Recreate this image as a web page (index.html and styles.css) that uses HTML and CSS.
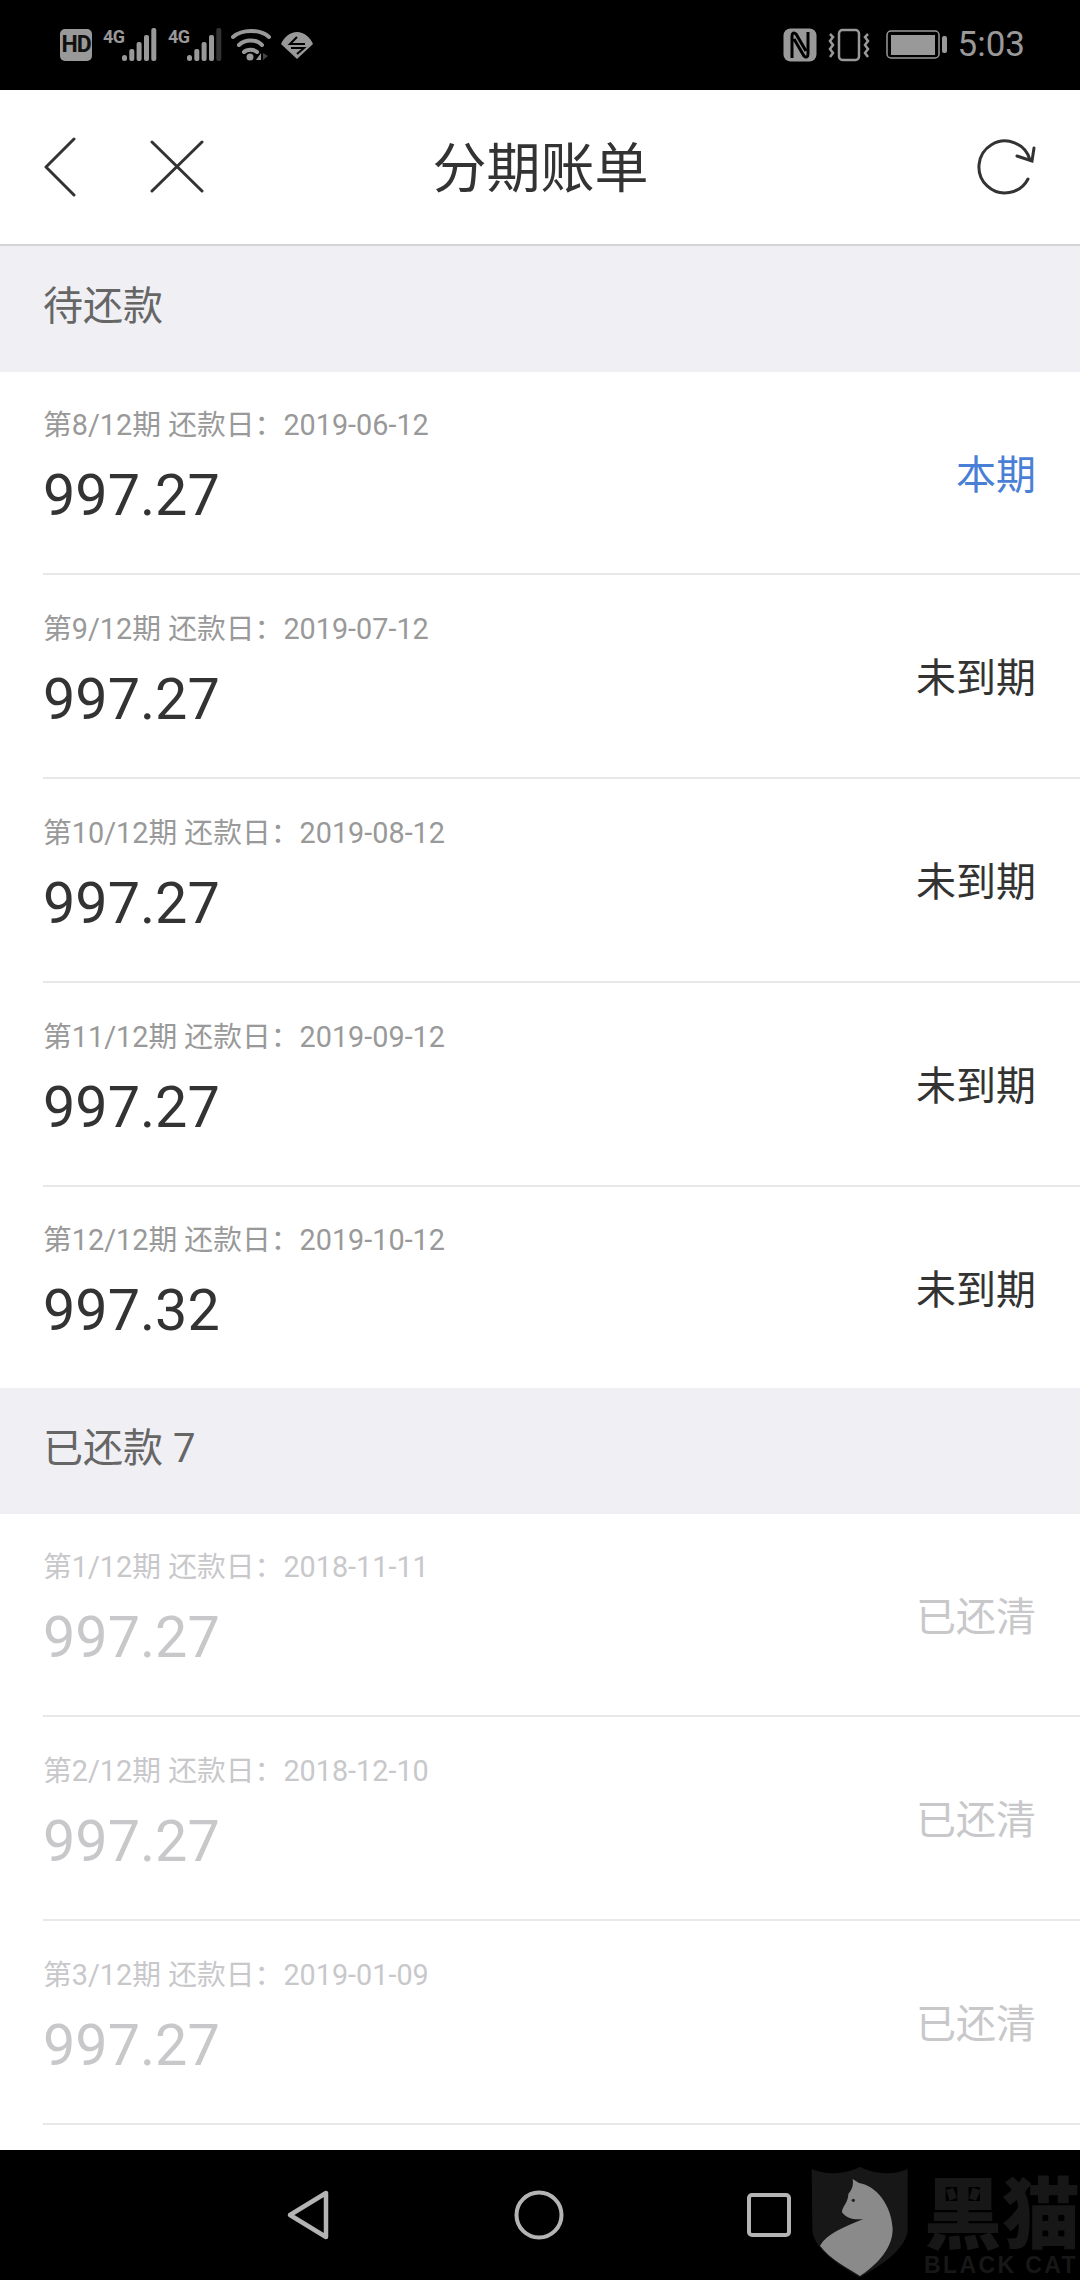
FILE: index.html
```html
<!DOCTYPE html>
<html lang="zh-CN">
<head>
<meta charset="utf-8">
<title>分期账单</title>
<link rel="stylesheet" href="styles.css">
</head>
<body>
<div class="phone">
  <header class="status">
    <div class="status-group">
      <span class="hd">HD</span>
      <div class="signal">
        <span class="net">4G</span>
        <svg class="bars" width="35" height="34" viewBox="0 0 35 34"><g fill="#999"><rect x="0" y="27" width="5" height="6" rx="2.500"/><rect x="7.300" y="21" width="5" height="12" rx="2"/><rect x="14.600" y="14" width="5" height="19" rx="2"/><rect x="22" y="7" width="5" height="26" rx="2"/><rect x="29.300" y="0" width="5" height="33" rx="2"/></g></svg>
      </div>
      <div class="signal">
        <span class="net">4G</span>
        <svg class="bars" width="35" height="34" viewBox="0 0 35 34"><g fill="#999"><rect x="0" y="27" width="5" height="6" rx="2.500"/><rect x="7.300" y="21" width="5" height="12" rx="2"/><rect x="14.600" y="14" width="5" height="19" rx="2"/><rect x="22" y="7" width="5" height="26" rx="2"/></g><rect x="29.300" y="0" width="5" height="33" rx="2" fill="#333"/></svg>
      </div>
      <svg class="wifi" width="42" height="34" viewBox="0 0 42 34"><g fill="none" stroke="#999" stroke-width="4" stroke-linecap="round"><path d="M3 9C12 1 30 1 39 9"/><path d="M9 17C15 11 27 11 32 17"/><path d="M14 24C17 21 24 21 27 24"/></g><circle cx="20" cy="29" r="3.500" fill="#999"/><path d="M26 32l5-7v7z" fill="#999"/><path d="M33 25l5 3-5 4z" fill="#444"/></svg>
      <svg class="diamond" width="34" height="30" viewBox="0 0 34 30"><path d="M1 14C4 7 10 2 17 2s13 5 16 12L17 29z" fill="#999"/><path d="M17 7l-7 7h15M11 18h13l-7 6" fill="none" stroke="#000" stroke-width="2"/></svg>
    </div>
    <div class="status-group status-right">
      <svg class="nfc" width="34" height="34" viewBox="0 0 34 34"><rect x="0.500" y="0.500" width="33" height="33" rx="7" fill="#999"/><path d="M9 30V8c0-3 2-4 4-2l10 17M25 4v22c0 3-2 4-4 2L11 11" fill="none" stroke="#000" stroke-width="3"/></svg>
      <svg class="vibrate" width="42" height="34" viewBox="0 0 42 34"><rect x="11" y="2" width="20" height="30" rx="3.500" fill="none" stroke="#999" stroke-width="2.500"/><path d="M2 6l3 3-3 4 3 4-3 4 3 4-3 4M40 6l-3 3 3 4-3 4 3 4-3 4 3 4" fill="none" stroke="#999" stroke-width="2.500"/></svg>
      <svg class="battery" width="62" height="30" viewBox="0 0 62 30"><rect x="1" y="1" width="52" height="27" rx="4" fill="none" stroke="#999" stroke-width="1.500"/><rect x="5" y="5" width="44" height="20" fill="#999"/><rect x="56" y="6" width="5" height="17" rx="2" fill="#999"/></svg>
      <span class="time">5:03</span>
    </div>
  </header>

  <nav class="topbar">
    <div class="top-left">
      <svg width="32" height="60" viewBox="0 0 32 60"><path d="M30 2L2 30l28 28" fill="none" stroke="#333" stroke-width="3" stroke-linecap="round" stroke-linejoin="round"/></svg>
      <svg width="54" height="54" viewBox="0 0 54 54"><path d="M2 2l50 49M52 2L2 51" fill="none" stroke="#333" stroke-width="3" stroke-linecap="round"/></svg>
    </div>
    <h1 class="title">分期账单</h1>
    <div class="top-right">
      <svg width="60" height="60" viewBox="0 0 60 60"><path d="M51 42A26 26 0 1 1 53 23" fill="none" stroke="#333" stroke-width="3" stroke-linecap="round"/><path d="M40 19l15 5 2-13" fill="none" stroke="#333" stroke-width="3" stroke-linecap="round"/></svg>
    </div>
  </nav>

  <main class="content">
    <section>
      <h2 class="section-head">待还款</h2>
      <ul class="list">
        <li class="row">
          <div class="info"><p class="date">第8/12期 还款日<span class="colon">：</span>2019-06-12</p><p class="amount">997.27</p></div>
          <span class="state state-current">本期</span>
        </li>
        <li class="row">
          <div class="info"><p class="date">第9/12期 还款日<span class="colon">：</span>2019-07-12</p><p class="amount">997.27</p></div>
          <span class="state">未到期</span>
        </li>
        <li class="row">
          <div class="info"><p class="date">第10/12期 还款日<span class="colon">：</span>2019-08-12</p><p class="amount">997.27</p></div>
          <span class="state">未到期</span>
        </li>
        <li class="row">
          <div class="info"><p class="date">第11/12期 还款日<span class="colon">：</span>2019-09-12</p><p class="amount">997.27</p></div>
          <span class="state">未到期</span>
        </li>
        <li class="row">
          <div class="info"><p class="date">第12/12期 还款日<span class="colon">：</span>2019-10-12</p><p class="amount">997.32</p></div>
          <span class="state">未到期</span>
        </li>
      </ul>
    </section>
    <section>
      <h2 class="section-head">已还款 7</h2>
      <ul class="list list-paid">
        <li class="row">
          <div class="info"><p class="date">第1/12期 还款日<span class="colon">：</span>2018-11-11</p><p class="amount">997.27</p></div>
          <span class="state">已还清</span>
        </li>
        <li class="row">
          <div class="info"><p class="date">第2/12期 还款日<span class="colon">：</span>2018-12-10</p><p class="amount">997.27</p></div>
          <span class="state">已还清</span>
        </li>
        <li class="row">
          <div class="info"><p class="date">第3/12期 还款日<span class="colon">：</span>2019-01-09</p><p class="amount">997.27</p></div>
          <span class="state">已还清</span>
        </li>
      </ul>
    </section>
  </main>

  <footer class="softkeys">
    <svg width="46" height="52" viewBox="0 0 46 52"><path d="M41 4v44L5 26z" fill="none" stroke="#b4b4b4" stroke-width="4.500" stroke-linejoin="round"/></svg>
    <svg width="50" height="50" viewBox="0 0 50 50"><circle cx="25" cy="25" r="22.500" fill="none" stroke="#b4b4b4" stroke-width="4"/></svg>
    <svg width="44" height="44" viewBox="0 0 44 44"><rect x="2" y="2" width="40" height="40" rx="3" fill="none" stroke="#b4b4b4" stroke-width="4"/></svg>
    <div class="watermark">
      <svg width="100" height="115" viewBox="90 100 300 345"><path d="M95 115C140 135 200 130 240 108C280 130 340 135 383 115V300C375 360 300 405 240 440C180 405 105 360 97 300Z" fill="#171717"/><path d="M218 145L237 157C290 165 335 225 338 295C338 360 280 410 240 436C200 410 150 385 120 345C140 310 190 290 250 265C225 268 200 265 186 245C185 230 205 215 205 190C212 180 222 170 218 145Z" fill="#8a8a8a"/><circle cx="220" cy="209" r="5" fill="#222"/></svg>
      <div class="mark-text">
        <span class="mark-cn">黑猫</span>
        <span class="mark-en">BLACK CAT</span>
      </div>
    </div>
  </footer>
</div>
</body>
</html>
```

FILE: styles.css
```css
* { box-sizing: border-box; }
html, body { margin: 0; padding: 0; background: #000; }
body { font-family: Roboto, "Noto Sans CJK SC", sans-serif; }
h1, h2, p, ul { margin: 0; padding: 0; font-weight: 400; }
ul { list-style: none; }

.phone {
  width: 1080px;
  height: 2280px;
  display: flex;
  flex-direction: column;
  overflow: hidden;
}

.status {
  height: 90px;
  flex: none;
  background: #000;
  display: flex;
  align-items: center;
  justify-content: space-between;
  padding: 0 55px 0 60px;
  color: #999;
}
.status-group { display: flex; align-items: center; }
.hd {
  width: 32px;
  height: 32px;
  border-radius: 5px;
  background: #999;
  color: #111;
  font-weight: 700;
  font-size: 23px;
  line-height: 32px;
  text-align: center;
  letter-spacing: -1px;
  margin-right: 11px;
}
.signal { display: flex; align-items: flex-start; height: 34px; margin-right: 11px; }
.net {
  font-size: 18px;
  font-weight: 700;
  line-height: 17px;
  width: 19px;
  letter-spacing: -0.5px;
  font-family: "Liberation Sans Narrow", Roboto, sans-serif;
}
.wifi { margin-left: -3px; margin-right: 8px; }
.nfc { margin-right: 11px; }
.vibrate { margin-right: 16px; }
.battery { margin-right: 10px; }
.time { font-size: 35px; line-height: 40px; }

.topbar {
  height: 156px;
  flex: none;
  background: #fff;
  border-bottom: 2px solid #d4d4d6;
  display: grid;
  grid-template-columns: 1fr auto 1fr;
  align-items: center;
  padding: 0 43px 0 44px;
}
.top-left { display: flex; align-items: center; gap: 74px; }
.top-right { display: flex; justify-content: flex-end; }
.title { font-size: 54px; line-height: 70px; padding-top: 5px; color: #333; }

.content { flex: 1; min-height: 0; overflow: hidden; background: #fff; }

.section-head {
  height: 126px;
  background: #efeff4;
  padding-left: 43px;
  font-size: 40px;
  line-height: 122px;
  color: #666;
}

.list { padding-left: 43px; }
.row {
  height: 204px;
  padding: 0 44px 10px 0;
  border-bottom: 2px solid #e8e8e8;
  display: flex;
  align-items: center;
  justify-content: space-between;
}
.row:first-child { height: 203px; }
.row:last-child { height: 201px; border-bottom: 0; }
.list-paid .row:last-child { height: 204px; border-bottom: 2px solid #e8e8e8; }

.date { font-size: 28.800px; line-height: 40px; color: #999; }
.colon { font-family: "Noto Sans CJK TC", sans-serif; }
.amount { font-size: 57.500px; line-height: 72px; margin-top: 15px; color: #333; }
.state { font-size: 40px; line-height: 56px; margin-top: 16px; color: #333; }
.state-current { color: #4a7fd6; }

.list-paid .date { color: #c8c8cb; }
.list-paid .amount { color: #c8c8cb; }
.list-paid .state { color: #c8c8cb; }

.softkeys {
  height: 130px;
  flex: none;
  background: #000;
  position: relative;
  display: flex;
  align-items: center;
  padding-left: 285px;
  gap: 183px;
}
.watermark {
  position: absolute;
  left: 810px;
  top: 14px;
  display: flex;
  gap: 14px;
}
.mark-text { display: flex; flex-direction: column; padding-top: 10px; }
.mark-cn {
  font-size: 78px;
  line-height: 86px;
  font-weight: 900;
  color: #171717;
  white-space: nowrap;
}
.mark-en {
  font-family: "Liberation Sans", sans-serif;
  font-size: 23px;
  line-height: 24px;
  margin-top: -7px;
  font-weight: 700;
  letter-spacing: 2.400px;
  color: #171717;
  white-space: nowrap;
}
```
